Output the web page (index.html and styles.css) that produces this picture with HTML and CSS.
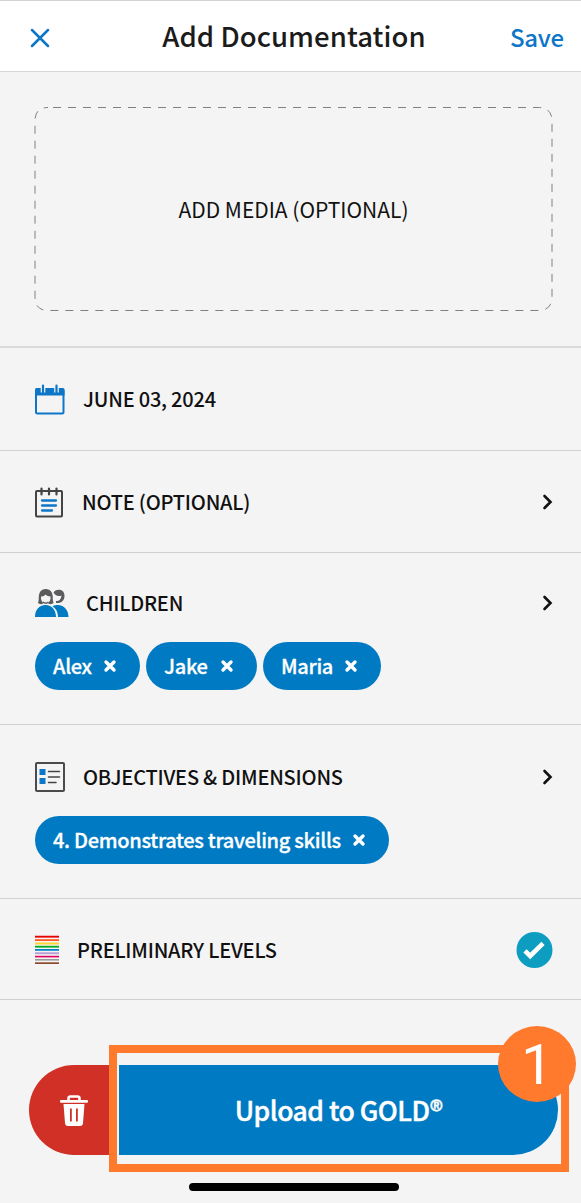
FILE: index.html
```html
<!DOCTYPE html>
<html lang="en">
<head>
<meta charset="UTF-8">
<meta name="viewport" content="width=device-width, initial-scale=1.0">
<title>Add Documentation</title>
<link rel="stylesheet" href="styles.css">
</head>
<body>
<header class="header">
    <svg class="close" viewBox="0 0 20 20"><path d="M2 2 18 18M18 2 2 18"/></svg>
    <h1 class="title"><span>Add Documentation</span></h1>
    <a class="save">Save</a>
</header>

<main>
    <section class="media">
        <div class="dropzone">
            <svg class="dashes" viewBox="0 0 519 206"><path d="M14 1.500H504Q518 1.500 518 15V191Q518 204.500 504 204.500H14Q1 204.500 1 191V15Q1 1.500 14 1.500"/></svg>
            <span class="media-text">ADD MEDIA (OPTIONAL)</span>
        </div>
    </section>

    <section class="section date">
        <div class="row">
            <svg class="icon icon-date" viewBox="0 0 30 31">
                <rect x="1" y="5" width="27.500" height="24.500" rx="1.500" fill="none" stroke="#0d76c6" stroke-width="2"/>
                <path fill="#0d76c6" d="M2 4h25.500q2 0 2 2v5.500H0V6q0-2 2-2z"/>
                <path fill="#f4f4f4" d="M5.700 3h4.600v5.500H5.700zM19.200 3h4.600v5.500h-4.600z"/>
                <path stroke="#0d76c6" stroke-width="2.200" stroke-linecap="round" d="M8 1.500v8M21.500 1.500v8"/>
            </svg>
            <span class="label">JUNE 03, 2024</span>
        </div>
    </section>

    <section class="section note">
        <div class="row">
            <svg class="icon icon-note" viewBox="0 0 28 31" fill="none" stroke-linecap="round">
                <rect x="1" y="4" width="26" height="25.500" rx="1" stroke="#444" stroke-width="2"/>
                <path stroke="#444" stroke-width="2.200" d="M6.500 1.500v6M14 1.500v6M21.500 1.500v6"/>
                <path stroke="#0d76c6" stroke-width="2.300" d="M7 13.500h14M7 18.500h14M7 23.500h10"/>
            </svg>
            <span class="label">NOTE (OPTIONAL)</span>
            <svg class="chevron" viewBox="0 0 12 16"><path d="M2.500 2 8.500 8 2.500 14"/></svg>
        </div>
    </section>

    <section class="section children">
        <div class="row">
            <svg class="icon icon-children" viewBox="0 0 34 29">
                <path fill="#5b5b5d" d="M18.500 3.500C20-.5 29.500-1 29.500 6.500c0 5-3 8-8.500 7.500v-2c3 .3 5-1.500 5.500-5.500-3 1.200-6 .5-8-3z"/>
                <path fill="#5b5b5d" d="M3 14C4.500 11 3 7 4.500 4 6.500-1.200 15-1.200 17 4c1.500 3 0 7 1.500 10-1.500 1.500-5 1.500-5.500 0 2-1.500 2.800-3.500 2.500-6.500-2 0-4-.8-5-2C9.500 7 7.500 7.500 6 7.500c-.3 3 .5 5 2.500 6.500-.5 1.500-4 1.500-5.500 0z"/>
                <path fill="none" stroke="#5b5b5d" stroke-width="1.200" d="M8 13q3 2.500 5.500 0"/>
                <path fill="#007ac2" d="M0 28C0 21 4 16 10.500 16S21 21 21 28zM17.500 17.300c2-1.300 4-1.300 5.500-1.300 6 0 10.500 5 10.500 12h-10.500c0-5-2-8.500-5.500-10.700z"/>
            </svg>
            <span class="label">CHILDREN</span>
            <svg class="chevron" viewBox="0 0 12 16"><path d="M2.500 2 8.500 8 2.500 14"/></svg>
        </div>
        <div class="chips">
            <span class="chip alex"><span>Alex</span><svg viewBox="0 0 14 14"><path d="M3 3 11 11M11 3 3 11"/></svg></span>
            <span class="chip jake"><span>Jake</span><svg viewBox="0 0 14 14"><path d="M3 3 11 11M11 3 3 11"/></svg></span>
            <span class="chip maria"><span>Maria</span><svg viewBox="0 0 14 14"><path d="M3 3 11 11M11 3 3 11"/></svg></span>
        </div>
    </section>

    <section class="section objectives">
        <div class="row">
            <svg class="icon icon-objectives" viewBox="0 0 30 30">
                <rect x="1" y="1" width="28" height="28" rx="1" fill="none" stroke="#4b4b4d" stroke-width="2"/>
                <path fill="#0d76c6" d="M4.500 7h6v6h-6zM4.500 16h6v6h-6z"/>
                <path stroke="#444" stroke-width="1.500" stroke-linecap="round" d="M13.500 9.500h11M13.500 15h11M13.500 20.500h7.500"/>
            </svg>
            <span class="label">OBJECTIVES &amp; DIMENSIONS</span>
            <svg class="chevron" viewBox="0 0 12 16"><path d="M2.500 2 8.500 8 2.500 14"/></svg>
        </div>
        <div class="chips">
            <span class="chip skill"><span>4. Demonstrates traveling skills</span><svg viewBox="0 0 14 14"><path d="M3 3 11 11M11 3 3 11"/></svg></span>
        </div>
    </section>

    <section class="section levels">
        <div class="row">
            <svg class="icon icon-levels" viewBox="0 0 24 30">
                <path fill="#f5b5b5" d="M0 0h24v3H0z"/><path fill="#e60000" d="M0 1h24v1.500H0z"/>
                <path fill="#ff5a1f" d="M0 4.200h24v1.800H0z"/>
                <path fill="#ffd534" d="M0 7.500h24v2H0z"/>
                <path fill="#00a818" d="M0 10.800h24v1.800H0z"/>
                <path fill="#0a82c8" d="M0 14h24v1.800H0z"/>
                <path fill="#b99bd3" d="M0 17.300h24v1.900H0z"/>
                <path fill="#e00061" d="M0 20.800h24v1.600H0z"/>
                <path fill="#999" d="M0 24h24v1.600H0z"/>
                <path fill="#8a4a2e" d="M0 27.300h24v1.700H0z"/>
            </svg>
            <span class="label">PRELIMINARY LEVELS</span>
            <svg class="check" viewBox="0 0 36 36"><circle cx="17.500" cy="18" r="18"/><path d="M8 18.800 13.200 24 26 11.300"/></svg>
        </div>
    </section>
</main>

<footer class="footer">
    <div class="actions">
        <button class="delete">
            <svg viewBox="0 0 28 31">
                <path fill="none" stroke="#fff" stroke-width="2.600" d="M8.500 6V3.500q0-2 2-2h7q2 0 2 2V6"/>
                <rect x="0" y="5" width="28" height="2.800" rx="1" fill="#fff"/>
                <path fill="#fff" fill-rule="evenodd" d="M3.500 9h21l-1.500 19q-.2 3-3 3H8q-2.800 0-3-3zM10 13.500v13h1.800v-13zM16 13.500v13h1.800v-13z"/>
            </svg>
        </button>
        <button class="upload"><span>Upload to GOLD<sup>®</sup></span></button>
        <div class="highlight"></div>
        <div class="badge">1</div>
    </div>
    <div class="home-bar"></div>
</footer>
</body>
</html>
```

FILE: styles.css
```css
* {
    box-sizing: border-box;
}

body {
    margin: 0;
    width: 581px;
    height: 1203px;
    overflow: hidden;
    background: #f4f4f4;
    color: #111;
    font-family: "Noto Sans CJK SC", "Noto Sans", sans-serif;
    font-weight: 500;
    white-space: nowrap;
}

svg {
    display: block;
    flex: none;
    overflow: visible;
}

button {
    border: 0;
    padding: 0;
    margin: 0;
    font: inherit;
    color: #fff;
}

.header {
    display: grid;
    grid-template-columns: 100px 1fr 106px;
    align-items: center;
    height: 72px;
    padding: 0 17px 0 30px;
    border-top: 1px solid #d2d2d2;
    border-bottom: 1px solid #d6d6d6;
    background: #fff;
}

.close {
    width: 20px;
    height: 20px;
    margin-top: 4px;
    fill: none;
    stroke: #0d76c6;
    stroke-width: 2.5;
    stroke-linecap: round;
}

.title {
    margin: 0 0 2px;
    text-align: center;
    font-size: 27.5px;
    line-height: 40px;
    letter-spacing: 0.05px;
    font-weight: 500;
    color: #1b1b1b;
}

.save {
    justify-self: end;
    margin-top: 2px;
    font-size: 24px;
    line-height: 36px;
    letter-spacing: -0.2px;
    color: #0d76c6;
}

.media {
    height: 276px;
    padding: 34px 28px 0 34px;
    border-bottom: 2px solid #dadada;
}

.dropzone {
    display: grid;
    place-items: center;
    width: 519px;
    height: 206px;
}

.dashes,
.media-text {
    grid-area: 1 / 1;
}

.dashes {
    width: 519px;
    height: 206px;
    fill: none;
    stroke: #808080;
    stroke-width: 1;
    stroke-dasharray: 8 7;
    stroke-dashoffset: -5;
}

.media-text {
    font-size: 21px;
    line-height: 30px;
    font-weight: 400;
}

.section {
    padding: 0 28px 0 35px;
    border-bottom: 1px solid #d0d0d0;
}

.row {
    display: flex;
    align-items: center;
    height: 36px;
}

.label {
    font-size: 20px;
    line-height: 30px;
    letter-spacing: -0.22px;
}

.date {
    height: 103px;
    padding-top: 33px;
}

.note {
    height: 102px;
    padding-top: 33px;
}

.children {
    height: 172px;
    padding-top: 32px;
}

.objectives {
    height: 174px;
    padding-top: 34px;
}

.levels {
    height: 101px;
    padding-top: 33px;
}

.icon-date {
    width: 30px;
    height: 31px;
    margin-right: 18px;
}

.icon-note {
    width: 28px;
    height: 31px;
    margin-right: 19px;
}

.icon-children {
    width: 34px;
    height: 29px;
    margin-right: 17px;
}

.icon-objectives {
    width: 30px;
    height: 30px;
    margin-right: 18px;
}

.icon-levels {
    width: 24px;
    height: 30px;
    margin-right: 18px;
}

.chevron {
    width: 12px;
    height: 16px;
    margin-left: auto;
    margin-right: -1px;
    fill: none;
    stroke: #111;
    stroke-width: 2.6;
    stroke-linecap: round;
}

.check {
    width: 36px;
    height: 36px;
    margin-left: auto;
    fill: #0d9dc0;
}

.check path {
    fill: none;
    stroke: #fff;
    stroke-width: 4.6;
}

.chips {
    display: flex;
    gap: 6px;
    margin-top: 20.5px;
}

.chip {
    display: flex;
    align-items: center;
    justify-content: space-between;
    height: 48px;
    padding: 0 23px 0 18px;
    border-radius: 24px;
    background: #007ac2;
    color: #fff;
    font-size: 20px;
    line-height: 30px;
    letter-spacing: -0.3px;
    -webkit-text-stroke: 0.3px #fff;
}

.chip svg {
    width: 14px;
    height: 14px;
    fill: none;
    stroke: #fff;
    stroke-width: 3.4;
    stroke-linecap: round;
}

.alex {
    width: 105px;
}

.jake {
    width: 111px;
}

.maria {
    width: 118px;
}

.skill {
    width: 354px;
}

.footer {
    height: 203px;
    padding: 65px 23px 0 29px;
}

.actions {
    display: flex;
    position: relative;
    height: 90px;
}

.delete {
    display: flex;
    align-items: center;
    width: 84px;
    padding-left: 31px;
    border-radius: 45px 0 0 45px;
    background: #d03025;
}

.delete svg {
    width: 28px;
    height: 31px;
}

.upload {
    width: 439px;
    margin-left: 6px;
    border-radius: 0 45px 45px 0;
    background: #007ac2;
    font-size: 26.5px;
    line-height: 40px;
    letter-spacing: -0.5px;
    -webkit-text-stroke: 0.4px #fff;
}

.upload sup {
    font-size: 27px;
    line-height: 0;
    vertical-align: baseline;
}

/* callout frame lies over the upload button */
.highlight {
    position: absolute;
    left: 80px;
    top: -20px;
    width: 460px;
    height: 127px;
    border: 8px solid #ff7a2d;
}

.badge {
    position: absolute;
    left: 469px;
    top: -39px;
    width: 78px;
    height: 76px;
    border-radius: 50%;
    background: #ff7a2d;
    color: #fff;
    font: 400 56px/78px Roboto, sans-serif;
    text-align: center;
}

.home-bar {
    width: 210px;
    height: 8px;
    margin: 28px 0 0 160px;
    border-radius: 4px;
    background: #000;
}
```
